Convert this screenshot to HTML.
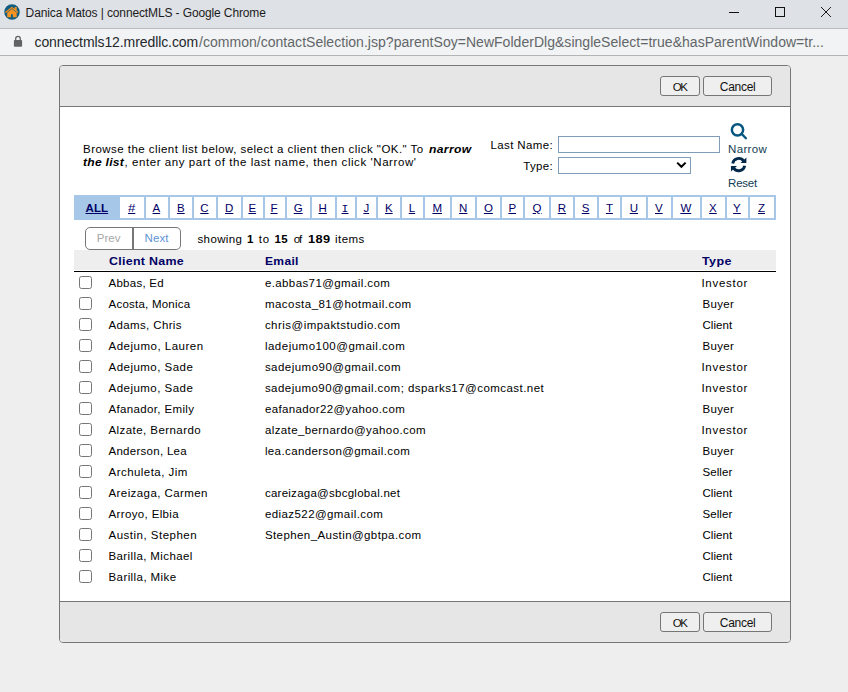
<!DOCTYPE html>
<html><head><meta charset="utf-8"><title>Danica Matos | connectMLS</title>
<style>
html,body{margin:0;padding:0;}
body{width:848px;height:692px;overflow:hidden;background:#eeeeee;font-family:"Liberation Sans",sans-serif;position:relative;}
.abs{position:absolute;}
.t{position:absolute;white-space:pre;font-family:"Liberation Sans",sans-serif;}
#titlebar{position:absolute;left:0;top:0;width:848px;height:28px;background:#dee1e6;}
#tline{position:absolute;left:0;top:28px;width:848px;height:1px;background:#b9bbbf;}
#addr{position:absolute;left:0;top:29px;width:848px;height:26px;background:#f1f3f4;}
#aline{position:absolute;left:0;top:55px;width:848px;height:1px;background:#b4b4b4;}
#dlg{position:absolute;left:59px;top:65px;width:730px;height:576px;border:1px solid #777777;border-radius:4px;background:#ffffff;overflow:hidden;}
#dhead{position:absolute;left:0;top:0;width:730px;height:40px;background:#e6e6e6;border-bottom:1px solid #777777;}
#dfoot{position:absolute;left:0;top:535px;width:730px;height:40px;background:#e6e6e6;border-top:1px solid #777777;}
.btn{position:absolute;height:18px;border:1px solid #767676;border-radius:3px;background:#efefef;}
#inp{position:absolute;left:558px;top:136px;width:160px;height:15px;border:1px solid #7f9db9;background:#fff;}
#sel{position:absolute;left:558px;top:157px;width:131px;height:15px;border:1px solid #7f9db9;background:#fff;}
#abar{position:absolute;left:74px;top:195px;width:702px;height:25px;background:#a6c7e7;}
.ac{position:absolute;top:197px;height:21px;background:#fff;}
.pbtn{position:absolute;top:227px;height:21px;border:1px solid #777;background:#fff;}
#thead{position:absolute;left:74px;top:250px;width:702px;height:20px;background:#eeeeee;}
#tline2{position:absolute;left:74px;top:271px;width:702px;height:1px;background:#000;}
.cb{position:absolute;left:79px;width:11px;height:11px;border:1px solid #767676;border-radius:2.5px;background:#fff;}
</style></head><body>
<div id="titlebar"></div><div id="tline"></div><div id="addr"></div><div id="aline"></div>
<!-- favicon -->
<svg class="abs" style="left:4px;top:4px" width="16" height="16" viewBox="0 0 16 16">
<circle cx="8" cy="8" r="7.75" fill="#0f5c81"/>
<path d="M1.1 8.1 L7.85 2.7 L10.7 5.0 V3.1 H12.7 V6.6 L14.3 8.0 L13.5 9.0 L7.85 4.3 L1.9 9.0 Z" fill="#f7931e"/>
<path d="M3.2 8.7 L7.85 4.9 L12.7 8.7 V13.3 H8.8 V10.3 H7.0 V13.3 H3.2 Z" fill="#f7931e"/>
</svg>
<!-- lock -->
<svg class="abs" style="left:13px;top:35px" width="10" height="12" viewBox="0 0 10 12">
<rect x="0.9" y="4.9" width="8.2" height="6.9" rx="0.8" fill="#616365"/>
<path d="M2.7 5.4 V3.6 a2.3 2.3 0 0 1 4.6 0 V5.4" fill="none" stroke="#616365" stroke-width="1.3"/>
</svg>
<!-- window controls -->
<div class="abs" style="left:729px;top:12px;width:10px;height:1px;background:#111"></div>
<div class="abs" style="left:775px;top:7px;width:8px;height:8px;border:1px solid #111"></div>
<svg class="abs" style="left:820px;top:6px" width="12" height="12" viewBox="0 0 12 12"><path d="M1 1 L11 11 M11 1 L1 11" stroke="#111" stroke-width="0.95" fill="none"/></svg>

<div id="dlg"><div id="dhead"></div><div id="dfoot"></div></div>
<div class="btn" style="left:660px;top:76px;width:38px"></div>
<div class="btn" style="left:703px;top:76px;width:67px"></div>
<div class="btn" style="left:660px;top:612px;width:38px"></div>
<div class="btn" style="left:703px;top:612px;width:67px"></div>

<div id="inp"></div><div id="sel"></div>
<svg class="abs" style="left:675.5px;top:161px" width="11" height="8" viewBox="0 0 11 8"><path d="M1.2 1.6 L5.4 5.8 L9.6 1.6" stroke="#000" stroke-width="2" fill="none"/></svg>
<!-- search icon -->
<svg class="abs" style="left:730px;top:122px" width="19" height="19" viewBox="0 0 19 19">
<circle cx="7.5" cy="7.85" r="5.65" fill="none" stroke="#04557f" stroke-width="2.5"/>
<path d="M11.6 11.9 L15.9 16.2" stroke="#04557f" stroke-width="2.3" stroke-linecap="round"/>
</svg>
<!-- refresh icon -->
<svg class="abs" style="left:730px;top:157px" width="18" height="17" viewBox="0 0 18 17">
<path d="M2.69 6.54 A6.1 6.1 0 0 1 13.7 4.1" fill="none" stroke="#02294a" stroke-width="2.8"/>
<path d="M16.4 0.6 V5.9 H10.5 Z" fill="#02294a"/>
<path d="M14.71 8.66 A6.1 6.1 0 0 1 3.7 11.1" fill="none" stroke="#02294a" stroke-width="2.8"/>
<path d="M0.95 14.5 V9.1 H7.0 Z" fill="#02294a"/>
</svg>

<div id="abar"></div>
<div class="ac" style="left:120.00px;width:24.00px"></div>
<div class="ac" style="left:146.00px;width:22.00px"></div>
<div class="ac" style="left:170.00px;width:22.00px"></div>
<div class="ac" style="left:194.00px;width:22.00px"></div>
<div class="ac" style="left:218.00px;width:23.00px"></div>
<div class="ac" style="left:243.00px;width:20.00px"></div>
<div class="ac" style="left:265.00px;width:20.00px"></div>
<div class="ac" style="left:287.00px;width:23.00px"></div>
<div class="ac" style="left:312.00px;width:23.00px"></div>
<div class="ac" style="left:337.00px;width:18.00px"></div>
<div class="ac" style="left:357.00px;width:19.00px"></div>
<div class="ac" style="left:378.00px;width:22.00px"></div>
<div class="ac" style="left:402.00px;width:21.00px"></div>
<div class="ac" style="left:425.00px;width:25.00px"></div>
<div class="ac" style="left:452.00px;width:23.00px"></div>
<div class="ac" style="left:477.00px;width:23.00px"></div>
<div class="ac" style="left:502.00px;width:21.00px"></div>
<div class="ac" style="left:525.00px;width:24.00px"></div>
<div class="ac" style="left:551.00px;width:22.00px"></div>
<div class="ac" style="left:575.00px;width:22.00px"></div>
<div class="ac" style="left:599.00px;width:21.00px"></div>
<div class="ac" style="left:622.00px;width:24.00px"></div>
<div class="ac" style="left:648.00px;width:23.00px"></div>
<div class="ac" style="left:673.00px;width:27.00px"></div>
<div class="ac" style="left:702.00px;width:23.00px"></div>
<div class="ac" style="left:727.00px;width:21.00px"></div>
<div class="ac" style="left:750.00px;width:24.00px"></div>
<div class="pbtn" style="left:85px;width:47px;border-radius:5px 0 0 5px;"></div>
<div class="pbtn" style="left:133px;width:46.6px;border-left:none;border-radius:0 5px 5px 0;"></div>
<div class="abs" style="left:132px;top:227px;width:1.5px;height:23px;background:#777"></div>
<div id="thead"></div><div id="tline2"></div>
<div class="cb" style="top:276px"></div>
<div class="cb" style="top:297px"></div>
<div class="cb" style="top:318px"></div>
<div class="cb" style="top:339px"></div>
<div class="cb" style="top:360px"></div>
<div class="cb" style="top:381px"></div>
<div class="cb" style="top:402px"></div>
<div class="cb" style="top:423px"></div>
<div class="cb" style="top:444px"></div>
<div class="cb" style="top:465px"></div>
<div class="cb" style="top:486px"></div>
<div class="cb" style="top:507px"></div>
<div class="cb" style="top:528px"></div>
<div class="cb" style="top:549px"></div>
<div class="cb" style="top:570px"></div>
<span class="t" style="left:25.60px;top:6.00px;letter-spacing:-0.123px;font-size:12px;line-height:14px;color:#1c1c1c;">Danica Matos | connectMLS - Google Chrome</span>
<span class="t" style="left:34.50px;top:34.00px;letter-spacing:-0.090px;font-size:14px;line-height:17px;color:#25282c;">connectmls12.mredllc.com</span>
<span class="t" style="left:199.00px;top:34.00px;letter-spacing:0.030px;font-size:14px;line-height:17px;color:#636669;">/common/contactSelection.jsp?parentSoy=NewFolderDlg&amp;singleSelect=true&amp;hasParentWindow=tr...</span>
<span class="t" style="left:672.70px;top:80.00px;letter-spacing:-1.345px;font-size:11.5px;line-height:14px;color:#111;">OK</span>
<span class="t" style="left:719.80px;top:80.00px;letter-spacing:-0.277px;font-size:12px;line-height:14px;color:#111;">Cancel</span>
<span class="t" style="left:672.70px;top:616.00px;letter-spacing:-1.345px;font-size:11.5px;line-height:14px;color:#111;">OK</span>
<span class="t" style="left:719.80px;top:616.00px;letter-spacing:-0.277px;font-size:12px;line-height:14px;color:#111;">Cancel</span>
<span class="t" style="left:83.00px;top:142.00px;letter-spacing:0.457px;font-size:11.5px;line-height:14px;color:#000000;">Browse the client list below, select a client then click &quot;OK.&quot; To</span>
<span class="t" style="left:428.75px;top:142.00px;letter-spacing:0.328px;font-size:11.5px;line-height:14px;color:#000000;font-weight:bold;font-style:italic;transform:scaleX(1.0539);transform-origin:0 0;">narrow</span>
<span class="t" style="left:83.00px;top:155.00px;letter-spacing:0.228px;font-size:11.5px;line-height:14px;color:#000000;font-weight:bold;font-style:italic;transform:scaleX(1.0546);transform-origin:0 0;">the list</span>
<span class="t" style="left:124.50px;top:155.00px;letter-spacing:0.568px;font-size:11.5px;line-height:14px;color:#000000;">, enter any part of the last name, then click &#x27;Narrow&#x27;</span>
<span class="t" style="left:490.50px;top:138.00px;letter-spacing:0.377px;font-size:11.5px;line-height:14px;color:#000000;">Last Name:</span>
<span class="t" style="left:523.25px;top:159.00px;letter-spacing:0.330px;font-size:11.5px;line-height:14px;color:#000000;">Type:</span>
<span class="t" style="left:728.10px;top:142.00px;letter-spacing:0.309px;font-size:11.5px;line-height:14px;color:#123e52;">Narrow</span>
<span class="t" style="left:728.10px;top:176.00px;letter-spacing:-0.237px;font-size:11.5px;line-height:14px;color:#123e52;">Reset</span>
<span class="t" style="left:85.50px;top:201.00px;letter-spacing:0.085px;font-size:11.5px;line-height:14px;color:#000066;font-weight:bold;text-decoration:underline;text-decoration-thickness:1px;text-underline-offset:1px;">ALL</span>
<span class="t" style="left:127.50px;top:201.00px;letter-spacing:0.000px;font-size:11.5px;line-height:14px;color:#000066;text-decoration:underline;text-decoration-thickness:1px;text-underline-offset:1px;transform:scaleX(1.1429);transform-origin:0 0;">#</span>
<span class="t" style="left:152.50px;top:201.00px;letter-spacing:0.000px;font-size:11.5px;line-height:14px;color:#000066;text-decoration:underline;text-decoration-thickness:1px;text-underline-offset:1px;">A</span>
<span class="t" style="left:177.00px;top:201.00px;letter-spacing:0.000px;font-size:11.5px;line-height:14px;color:#000066;text-decoration:underline;text-decoration-thickness:1px;text-underline-offset:1px;">B</span>
<span class="t" style="left:200.25px;top:201.00px;letter-spacing:0.000px;font-size:11.5px;line-height:14px;color:#000066;text-decoration:underline;text-decoration-thickness:1px;text-underline-offset:1px;">C</span>
<span class="t" style="left:225.00px;top:201.00px;letter-spacing:0.000px;font-size:11.5px;line-height:14px;color:#000066;text-decoration:underline;text-decoration-thickness:1px;text-underline-offset:1px;">D</span>
<span class="t" style="left:248.45px;top:201.00px;letter-spacing:0.000px;font-size:11.5px;line-height:14px;color:#000066;text-decoration:underline;text-decoration-thickness:1px;text-underline-offset:1px;">E</span>
<span class="t" style="left:270.50px;top:201.00px;letter-spacing:0.000px;font-size:11.5px;line-height:14px;color:#000066;text-decoration:underline;text-decoration-thickness:1px;text-underline-offset:1px;">F</span>
<span class="t" style="left:293.75px;top:201.00px;letter-spacing:0.000px;font-size:11.5px;line-height:14px;color:#000066;text-decoration:underline;text-decoration-thickness:1px;text-underline-offset:1px;">G</span>
<span class="t" style="left:318.50px;top:201.00px;letter-spacing:0.000px;font-size:11.5px;line-height:14px;color:#000066;text-decoration:underline;text-decoration-thickness:1px;text-underline-offset:1px;">H</span>
<span class="t" style="left:341.62px;top:202.00px;letter-spacing:0.000px;font-size:11.5px;line-height:14px;color:#000066;text-decoration:underline;text-decoration-thickness:1px;text-underline-offset:1px;font-family:'Liberation Mono',monospace;">I</span>
<span class="t" style="left:363.38px;top:201.00px;letter-spacing:0.000px;font-size:11.5px;line-height:14px;color:#000066;text-decoration:underline;text-decoration-thickness:1px;text-underline-offset:1px;">J</span>
<span class="t" style="left:385.00px;top:201.00px;letter-spacing:0.000px;font-size:11.5px;line-height:14px;color:#000066;text-decoration:underline;text-decoration-thickness:1px;text-underline-offset:1px;">K</span>
<span class="t" style="left:408.75px;top:201.00px;letter-spacing:0.000px;font-size:11.5px;line-height:14px;color:#000066;text-decoration:underline;text-decoration-thickness:1px;text-underline-offset:1px;">L</span>
<span class="t" style="left:432.38px;top:201.00px;letter-spacing:0.000px;font-size:11.5px;line-height:14px;color:#000066;text-decoration:underline;text-decoration-thickness:1px;text-underline-offset:1px;">M</span>
<span class="t" style="left:459.12px;top:201.00px;letter-spacing:0.000px;font-size:11.5px;line-height:14px;color:#000066;text-decoration:underline;text-decoration-thickness:1px;text-underline-offset:1px;">N</span>
<span class="t" style="left:483.88px;top:201.00px;letter-spacing:0.000px;font-size:11.5px;line-height:14px;color:#000066;text-decoration:underline;text-decoration-thickness:1px;text-underline-offset:1px;">O</span>
<span class="t" style="left:508.38px;top:201.00px;letter-spacing:0.000px;font-size:11.5px;line-height:14px;color:#000066;text-decoration:underline;text-decoration-thickness:1px;text-underline-offset:1px;">P</span>
<span class="t" style="left:532.62px;top:201.00px;letter-spacing:0.000px;font-size:11.5px;line-height:14px;color:#000066;text-decoration:underline;text-decoration-thickness:1px;text-underline-offset:1px;">Q</span>
<span class="t" style="left:557.75px;top:201.00px;letter-spacing:0.000px;font-size:11.5px;line-height:14px;color:#000066;text-decoration:underline;text-decoration-thickness:1px;text-underline-offset:1px;">R</span>
<span class="t" style="left:581.75px;top:201.00px;letter-spacing:0.000px;font-size:11.5px;line-height:14px;color:#000066;text-decoration:underline;text-decoration-thickness:1px;text-underline-offset:1px;">S</span>
<span class="t" style="left:605.88px;top:201.00px;letter-spacing:0.000px;font-size:11.5px;line-height:14px;color:#000066;text-decoration:underline;text-decoration-thickness:1px;text-underline-offset:1px;">T</span>
<span class="t" style="left:629.75px;top:201.00px;letter-spacing:0.000px;font-size:11.5px;line-height:14px;color:#000066;text-decoration:underline;text-decoration-thickness:1px;text-underline-offset:1px;">U</span>
<span class="t" style="left:655.00px;top:201.00px;letter-spacing:0.000px;font-size:11.5px;line-height:14px;color:#000066;text-decoration:underline;text-decoration-thickness:1px;text-underline-offset:1px;">V</span>
<span class="t" style="left:680.38px;top:201.00px;letter-spacing:0.000px;font-size:11.5px;line-height:14px;color:#000066;text-decoration:underline;text-decoration-thickness:1px;text-underline-offset:1px;">W</span>
<span class="t" style="left:709.12px;top:201.00px;letter-spacing:0.000px;font-size:11.5px;line-height:14px;color:#000066;text-decoration:underline;text-decoration-thickness:1px;text-underline-offset:1px;">X</span>
<span class="t" style="left:733.12px;top:201.00px;letter-spacing:0.000px;font-size:11.5px;line-height:14px;color:#000066;text-decoration:underline;text-decoration-thickness:1px;text-underline-offset:1px;">Y</span>
<span class="t" style="left:758.00px;top:201.00px;letter-spacing:0.000px;font-size:11.5px;line-height:14px;color:#000066;text-decoration:underline;text-decoration-thickness:1px;text-underline-offset:1px;">Z</span>
<span class="t" style="left:96.75px;top:231.00px;letter-spacing:0.035px;font-size:11.5px;line-height:14px;color:#a8a8a8;">Prev</span>
<span class="t" style="left:144.50px;top:231.00px;letter-spacing:0.100px;font-size:11.5px;line-height:14px;color:#5f93d6;">Next</span>
<span class="t" style="left:197.50px;top:232.00px;letter-spacing:0.367px;font-size:11.5px;line-height:14px;color:#000000;">showing</span>
<span class="t" style="left:247.12px;top:232.00px;letter-spacing:0.000px;font-size:11.5px;line-height:14px;color:#000000;font-weight:bold;">1</span>
<span class="t" style="left:258.75px;top:232.00px;letter-spacing:0.805px;font-size:11.5px;line-height:14px;color:#000000;">to</span>
<span class="t" style="left:274.50px;top:232.00px;letter-spacing:0.354px;font-size:11.5px;line-height:14px;color:#000000;font-weight:bold;">15</span>
<span class="t" style="left:293.75px;top:232.00px;letter-spacing:-1.146px;font-size:11.5px;line-height:14px;color:#000000;">of</span>
<span class="t" style="left:308.25px;top:232.00px;letter-spacing:0.391px;font-size:11.5px;line-height:14px;color:#000000;font-weight:bold;transform:scaleX(1.1111);transform-origin:0 0;">189</span>
<span class="t" style="left:335.00px;top:232.00px;letter-spacing:0.444px;font-size:11.5px;line-height:14px;color:#000000;">items</span>
<span class="t" style="left:108.90px;top:254.00px;letter-spacing:0.275px;font-size:11.5px;line-height:14px;color:#000066;font-weight:bold;transform:scaleX(1.0796);transform-origin:0 0;">Client Name</span>
<span class="t" style="left:265.00px;top:254.00px;letter-spacing:0.318px;font-size:11.5px;line-height:14px;color:#000066;font-weight:bold;transform:scaleX(1.0470);transform-origin:0 0;">Email</span>
<span class="t" style="left:702.00px;top:254.00px;letter-spacing:0.355px;font-size:11.5px;line-height:14px;color:#000066;font-weight:bold;transform:scaleX(1.0879);transform-origin:0 0;">Type</span>
<span class="t" style="left:108.50px;top:276.00px;letter-spacing:0.260px;font-size:11.5px;line-height:14px;color:#000000;">Abbas, Ed</span>
<span class="t" style="left:264.90px;top:276.00px;letter-spacing:0.397px;font-size:11.5px;line-height:14px;color:#000000;">e.abbas71@gmail.com</span>
<span class="t" style="left:701.40px;top:276.00px;letter-spacing:0.718px;font-size:11.5px;line-height:14px;color:#000000;">Investor</span>
<span class="t" style="left:108.50px;top:297.00px;letter-spacing:0.233px;font-size:11.5px;line-height:14px;color:#000000;">Acosta, Monica</span>
<span class="t" style="left:264.90px;top:297.00px;letter-spacing:0.470px;font-size:11.5px;line-height:14px;color:#000000;">macosta_81@hotmail.com</span>
<span class="t" style="left:702.40px;top:297.00px;letter-spacing:0.347px;font-size:11.5px;line-height:14px;color:#000000;">Buyer</span>
<span class="t" style="left:108.50px;top:318.00px;letter-spacing:0.362px;font-size:11.5px;line-height:14px;color:#000000;">Adams, Chris</span>
<span class="t" style="left:264.90px;top:318.00px;letter-spacing:0.464px;font-size:11.5px;line-height:14px;color:#000000;">chris@impaktstudio.com</span>
<span class="t" style="left:702.40px;top:318.00px;letter-spacing:0.079px;font-size:11.5px;line-height:14px;color:#000000;">Client</span>
<span class="t" style="left:108.50px;top:339.00px;letter-spacing:0.504px;font-size:11.5px;line-height:14px;color:#000000;">Adejumo, Lauren</span>
<span class="t" style="left:264.90px;top:339.00px;letter-spacing:0.500px;font-size:11.5px;line-height:14px;color:#000000;">ladejumo100@gmail.com</span>
<span class="t" style="left:702.40px;top:339.00px;letter-spacing:0.347px;font-size:11.5px;line-height:14px;color:#000000;">Buyer</span>
<span class="t" style="left:108.50px;top:360.00px;letter-spacing:0.480px;font-size:11.5px;line-height:14px;color:#000000;">Adejumo, Sade</span>
<span class="t" style="left:264.90px;top:360.00px;letter-spacing:0.471px;font-size:11.5px;line-height:14px;color:#000000;">sadejumo90@gmail.com</span>
<span class="t" style="left:701.40px;top:360.00px;letter-spacing:0.718px;font-size:11.5px;line-height:14px;color:#000000;">Investor</span>
<span class="t" style="left:108.50px;top:381.00px;letter-spacing:0.480px;font-size:11.5px;line-height:14px;color:#000000;">Adejumo, Sade</span>
<span class="t" style="left:264.90px;top:381.00px;letter-spacing:0.451px;font-size:11.5px;line-height:14px;color:#000000;">sadejumo90@gmail.com; dsparks17@comcast.net</span>
<span class="t" style="left:701.40px;top:381.00px;letter-spacing:0.718px;font-size:11.5px;line-height:14px;color:#000000;">Investor</span>
<span class="t" style="left:108.50px;top:402.00px;letter-spacing:0.354px;font-size:11.5px;line-height:14px;color:#000000;">Afanador, Emily</span>
<span class="t" style="left:264.90px;top:402.00px;letter-spacing:0.371px;font-size:11.5px;line-height:14px;color:#000000;">eafanador22@yahoo.com</span>
<span class="t" style="left:702.40px;top:402.00px;letter-spacing:0.347px;font-size:11.5px;line-height:14px;color:#000000;">Buyer</span>
<span class="t" style="left:108.50px;top:423.00px;letter-spacing:0.432px;font-size:11.5px;line-height:14px;color:#000000;">Alzate, Bernardo</span>
<span class="t" style="left:264.90px;top:423.00px;letter-spacing:0.401px;font-size:11.5px;line-height:14px;color:#000000;">alzate_bernardo@yahoo.com</span>
<span class="t" style="left:701.40px;top:423.00px;letter-spacing:0.718px;font-size:11.5px;line-height:14px;color:#000000;">Investor</span>
<span class="t" style="left:108.50px;top:444.00px;letter-spacing:0.278px;font-size:11.5px;line-height:14px;color:#000000;">Anderson, Lea</span>
<span class="t" style="left:264.90px;top:444.00px;letter-spacing:0.391px;font-size:11.5px;line-height:14px;color:#000000;">lea.canderson@gmail.com</span>
<span class="t" style="left:702.40px;top:444.00px;letter-spacing:0.347px;font-size:11.5px;line-height:14px;color:#000000;">Buyer</span>
<span class="t" style="left:108.50px;top:465.00px;letter-spacing:0.459px;font-size:11.5px;line-height:14px;color:#000000;">Archuleta, Jim</span>
<span class="t" style="left:702.40px;top:465.00px;letter-spacing:0.106px;font-size:11.5px;line-height:14px;color:#000000;">Seller</span>
<span class="t" style="left:108.50px;top:486.00px;letter-spacing:0.414px;font-size:11.5px;line-height:14px;color:#000000;">Areizaga, Carmen</span>
<span class="t" style="left:264.90px;top:486.00px;letter-spacing:0.261px;font-size:11.5px;line-height:14px;color:#000000;">careizaga@sbcglobal.net</span>
<span class="t" style="left:702.40px;top:486.00px;letter-spacing:0.079px;font-size:11.5px;line-height:14px;color:#000000;">Client</span>
<span class="t" style="left:108.50px;top:507.00px;letter-spacing:0.359px;font-size:11.5px;line-height:14px;color:#000000;">Arroyo, Elbia</span>
<span class="t" style="left:264.90px;top:507.00px;letter-spacing:0.422px;font-size:11.5px;line-height:14px;color:#000000;">ediaz522@gmail.com</span>
<span class="t" style="left:702.40px;top:507.00px;letter-spacing:0.106px;font-size:11.5px;line-height:14px;color:#000000;">Seller</span>
<span class="t" style="left:108.50px;top:528.00px;letter-spacing:0.496px;font-size:11.5px;line-height:14px;color:#000000;">Austin, Stephen</span>
<span class="t" style="left:264.90px;top:528.00px;letter-spacing:0.418px;font-size:11.5px;line-height:14px;color:#000000;">Stephen_Austin@gbtpa.com</span>
<span class="t" style="left:702.40px;top:528.00px;letter-spacing:0.079px;font-size:11.5px;line-height:14px;color:#000000;">Client</span>
<span class="t" style="left:108.50px;top:549.00px;letter-spacing:0.389px;font-size:11.5px;line-height:14px;color:#000000;">Barilla, Michael</span>
<span class="t" style="left:702.40px;top:549.00px;letter-spacing:0.079px;font-size:11.5px;line-height:14px;color:#000000;">Client</span>
<span class="t" style="left:108.50px;top:570.00px;letter-spacing:0.418px;font-size:11.5px;line-height:14px;color:#000000;">Barilla, Mike</span>
<span class="t" style="left:702.40px;top:570.00px;letter-spacing:0.079px;font-size:11.5px;line-height:14px;color:#000000;">Client</span>
</body></html>
